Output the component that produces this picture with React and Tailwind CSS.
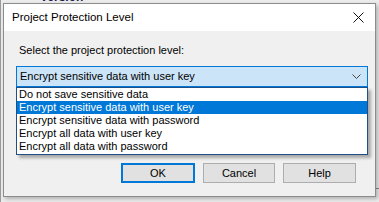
export default function App() {
  const items = [
    "Do not save sensitive data",
    "Encrypt sensitive data with user key",
    "Encrypt sensitive data with password",
    "Encrypt all data with user key",
    "Encrypt all data with password",
  ];
  const selected = 1;

  return (
    <div
      className="relative w-[379px] h-[202px] bg-[#ececec] overflow-hidden pt-[3px] pl-[3px]"
      style={{ fontFamily: '"Liberation Sans", Arial, sans-serif' }}
    >
      {/* background app behind the dialog */}
      <div className="absolute left-[40px] -top-[11px] text-[12px] leading-[16px] font-bold text-[#1a1a4a]">Version</div>
      <div className="absolute left-0 top-0 w-[1px] h-full bg-[#9a9a9a]" />
      <div className="absolute left-[368px] top-[188px] w-[11px] h-[1px] bg-[#8a8a8a]" />

      {/* dialog window */}
      <div className="relative w-[373px] h-[194px] border border-[#8c8c8c] bg-[#f0f0f0] flex flex-col shadow-[2px_2px_4px_rgba(0,0,0,0.25)]">
        <div className="h-[27px] bg-white flex items-center justify-between pl-[8px] pr-[9px] shrink-0">
          <span className="text-[11.5px] text-black">Project Protection Level</span>
          <svg width="11" height="11" viewBox="0 0 11 11" className="mr-[2px]">
            <path d="M0.5 0.5 L10.5 10.5 M10.5 0.5 L0.5 10.5" stroke="#111" strokeWidth="1" />
          </svg>
        </div>

        <div className="relative flex-1 px-[12px] pt-[12px]">
          <div className="text-[11px] text-black pl-[3px] leading-[15px]">Select the project protection level:</div>

          <div className="mt-[8px] h-[21px] w-[352px] border border-[#0078d7] bg-[#cce4f7] flex items-center justify-between pl-[3px] pr-[6px]">
            <span className="text-[11px] text-black">Encrypt sensitive data with user key</span>
            <svg width="9" height="5" viewBox="0 0 9 5">
              <path d="M0.5 0.5 L4.5 4.5 L8.5 0.5" stroke="#444" strokeWidth="1" fill="none" />
            </svg>
          </div>

          <div className="flex justify-end gap-[8px] mt-[76px] pr-[7px]">
            <button className="w-[74px] h-[20px] border-2 border-[#0078d7] bg-[#e1e1e1] text-[11px] text-black flex items-center justify-center">OK</button>
            <button className="w-[72px] h-[20px] border border-[#adadad] bg-[#e1e1e1] text-[11px] text-black flex items-center justify-center">Cancel</button>
            <button className="w-[73px] h-[20px] border border-[#adadad] bg-[#e1e1e1] text-[11px] text-black flex items-center justify-center">Help</button>
          </div>

          {/* dropdown list overlay */}
          <div className="absolute left-[12px] top-[56px] w-[352px] border border-[#1f4f86] bg-white shadow-[3px_3px_3px_rgba(0,0,0,0.3)] pb-[1px]">
            {items.map((t, i) => (
              <div
                key={t}
                className={
                  i === selected
                    ? "h-[13px] leading-[13px] pl-[2px] text-[11px] bg-[#0078d7] text-white"
                    : "h-[13px] leading-[13px] pl-[2px] text-[11px] text-black"
                }
              >
                {t}
              </div>
            ))}
          </div>
        </div>
      </div>
    </div>
  );
}
